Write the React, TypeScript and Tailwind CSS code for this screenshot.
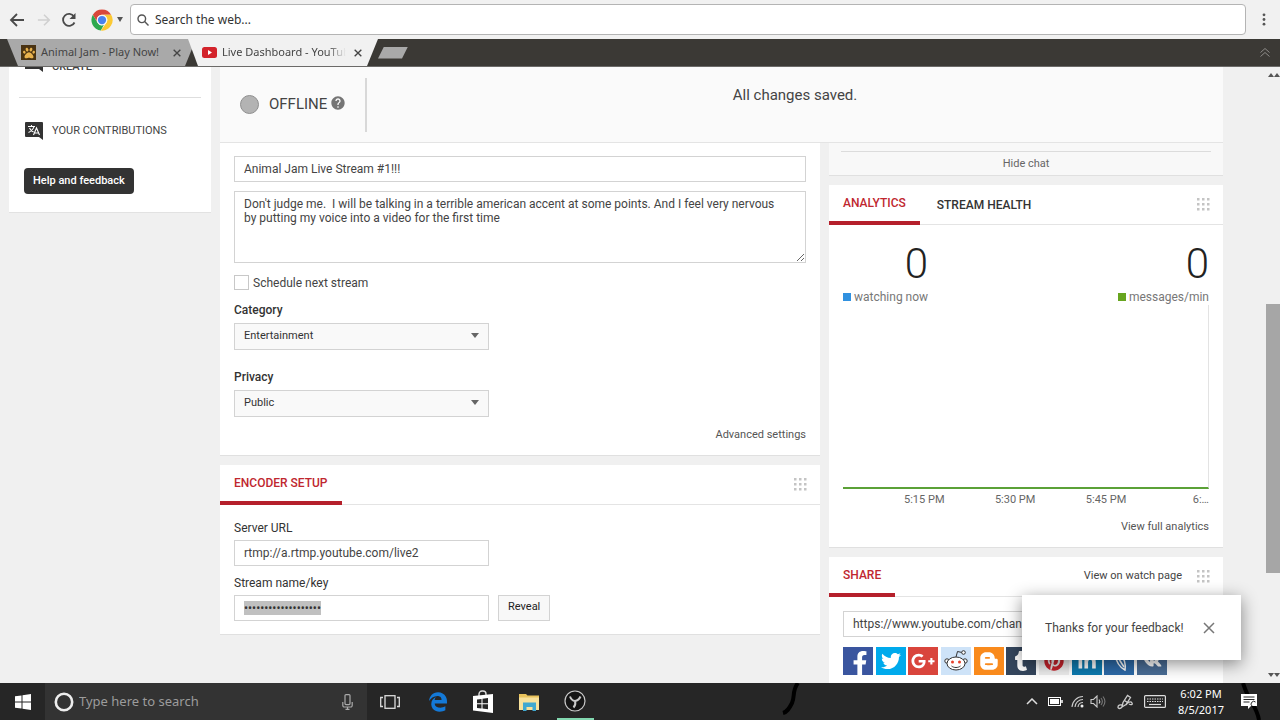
import React, { useEffect, useRef, useState } from 'react';
import {
  FaBloggerB,
  FaEdgeLegacy,
  FaFacebookF,
  FaGooglePlusG,
  FaLinkedinIn,
  FaPaw,
  FaPinterest,
  FaTumblr,
  FaTwitter,
  FaVk,
} from 'react-icons/fa';
import { MdHelp } from 'react-icons/md';

const inputClass =
  'h-[26px] w-full border border-[#d3d3d3] bg-white px-[9px] text-xs text-[#444] outline-none';

const ChromeLogo = () => (
  <svg viewBox="0 0 48 48" className="size-[22px]">
    <circle cx="24" cy="24" r="23" fill="#fff" />
    <path d="M24 1a23 23 0 0 1 20 11.5H24a11.5 11.5 0 0 0-10 17L4 12.5A23 23 0 0 1 24 1z" fill="#d9483b" />
    <path d="M4 12.5l10 17.200A11.500 11.500 0 0 0 28 35l-6.500 12A23 23 0 0 1 4 12.500z" fill="#2da94f" />
    <path d="M44 12.500A23 23 0 0 1 21.500 47L34 29.700A11.500 11.500 0 0 0 28 13l-4-.5z" fill="#fbc934" />
    <circle cx="24" cy="24" r="11.500" fill="#f5f5f5" />
    <circle cx="24" cy="24" r="9" fill="#4a82ee" />
  </svg>
);

const RedditLogo = () => (
  <svg viewBox="0 0 30 30" className="size-[30px]" stroke="#333" strokeWidth="1" fill="#fff">
    <circle cx="6" cy="15" r="2.200" />
    <circle cx="24" cy="15" r="2.200" />
    <path d="M15 11l1.500-5.500 4.500 1" fill="none" />
    <circle cx="22.500" cy="6.500" r="1.800" />
    <ellipse cx="15" cy="17.500" rx="9" ry="6.500" />
    <circle cx="11.500" cy="16" r="1.500" fill="#e8402a" stroke="none" />
    <circle cx="18.500" cy="16" r="1.500" fill="#e8402a" stroke="none" />
    <path d="M10.500 20c2.500 2 6.500 2 9 0" fill="none" />
  </svg>
);

const JournalLogo = () => (
  <svg viewBox="0 0 30 30" className="size-[30px]" fill="none" stroke="#fff" strokeWidth="1.500">
    <path d="M11 8c1 7 4 13 10 16 1-6-1-12-5-17z" />
    <path d="M13 10l7 11" />
  </svg>
);

const shares = [
  { name: 'Facebook', tile: 'bg-[#3a559f]', icon: <FaFacebookF className="mt-1 ml-1 size-6" /> },
  { name: 'Twitter', tile: 'bg-[#00aaec]', icon: <FaTwitter className="size-5" /> },
  { name: 'Google+', tile: 'bg-[#d9453c]', icon: <FaGooglePlusG className="size-6" /> },
  { name: 'Reddit', tile: 'bg-[#cee3f8]', icon: <RedditLogo /> },
  { name: 'Blogger', tile: 'bg-[#f98a1c]', icon: <FaBloggerB className="size-5" /> },
  { name: 'Tumblr', tile: 'bg-[#34465d]', icon: <FaTumblr className="size-5" /> },
  { name: 'Pinterest', tile: 'bg-[#eeeeee]', icon: <FaPinterest className="size-5 text-[#c8232c]" /> },
  { name: 'LinkedIn', tile: 'bg-[#0d7bb0]', icon: <FaLinkedinIn className="size-5" /> },
  { name: 'LiveJournal', tile: 'bg-[#2d6aa8]', icon: <JournalLogo /> },
  { name: 'VK', tile: 'bg-[#4a6d96]', icon: <FaVk className="size-5" /> },
];

const CloseIcon = ({ className }: { className: string }) => (
  <svg viewBox="0 0 12 12" className={className} stroke="currentColor" fill="none">
    <path d="M1 1l10 10M11 1L1 11" />
  </svg>
);

const DragDots = () => (
  <svg viewBox="0 0 13 13" className="size-[13px] shrink-0" fill="#c4c4c4">
    {[0, 5, 10].map((y) =>
      [0, 5, 10].map((x) => <rect key={`${x}-${y}`} x={x} y={y} width="2.500" height="2.500" />),
    )}
  </svg>
);

function Toolbar() {
  return (
    <header className="flex h-[39px] shrink-0 items-center bg-[#f1f1f1] pr-[14px] pl-[9px] font-['Noto_Sans',sans-serif]">
      <button aria-label="Back" className="mr-3">
        <svg viewBox="0 0 16 16" className="size-4" fill="none" stroke="#4a4a4a" strokeWidth="1.800">
          <path d="M15 8H2M8 2L2 8l6 6" />
        </svg>
      </button>
      <button aria-label="Forward" className="mr-[10px]">
        <svg viewBox="0 0 16 16" className="size-[14px]" fill="none" stroke="#d0d0d0" strokeWidth="1.800">
          <path d="M1 8h13M8 2l6 6-6 6" />
        </svg>
      </button>
      <button aria-label="Reload" className="mr-[14px]">
        <svg viewBox="0 0 16 16" className="size-4" fill="none" stroke="#4a4a4a" strokeWidth="1.800">
          <path d="M13.500 10.500A6 6 0 1 1 13 4.500" />
          <path d="M14.500 1v6h-6z" fill="#4a4a4a" stroke="none" />
        </svg>
      </button>
      <button aria-label="Search engine" className="mr-[7px] flex items-center gap-1">
        <ChromeLogo />
        <svg viewBox="0 0 6 5" className="h-[5px] w-[6px]" fill="#555">
          <path d="M0 0h6L3 5z" />
        </svg>
      </button>
      <label className="flex h-[31px] flex-1 items-center gap-[6px] rounded-sm border border-[#b4b4b4] bg-white px-[6px]">
        <svg viewBox="0 0 12 12" className="size-3" fill="none" stroke="#555" strokeWidth="1.400">
          <circle cx="4.800" cy="4.800" r="3.800" />
          <path d="M7.600 7.600L11.500 11.500" />
        </svg>
        <input
          aria-label="Search the web"
          defaultValue="Search the web..."
          className="flex-1 text-xs text-[#333] outline-none"
        />
      </label>
      <button aria-label="Menu" className="ml-4">
        <svg viewBox="0 0 4 14" className="h-[13px] w-1" fill="#555">
          <circle cx="2" cy="2" r="1.500" />
          <circle cx="2" cy="7" r="1.500" />
          <circle cx="2" cy="12" r="1.500" />
        </svg>
      </button>
    </header>
  );
}

function TabStrip() {
  return (
    <nav className="flex h-7 shrink-0 items-stretch border-b border-[#6b6a68] bg-[#3b3935] pl-[7px] font-['Noto_Sans',sans-serif] text-[11px] text-[#444]">
      <div className="flex w-[189px] items-center bg-[#a9a9a9] pl-[14px] [clip-path:polygon(0_0,100%_0,178px_100%,11px_100%)]">
        <span className="mr-[5px] flex size-[15px] items-center justify-center bg-[#4a3312]">
          <FaPaw className="size-3 text-[#e8b24d]" />
        </span>
        <a href="#play" className="w-[132px] whitespace-nowrap">
          Animal Jam - Play Now!
        </a>
        <button aria-label="Close Animal Jam tab">
          <CloseIcon className="size-2 [stroke-width:2]" />
        </button>
      </div>
      <div className="-ml-2 flex w-[190px] items-center bg-[#f1f1f1] pl-[14px] [clip-path:polygon(0_0,100%_0,179px_100%,10px_100%)]">
        <svg viewBox="0 0 15 11" className="mr-[5px] h-[11px] w-[15px] shrink-0">
          <rect width="15" height="11" rx="2.500" fill="#d3232b" />
          <path d="M6 3l4 2.500L6 8z" fill="#fff" />
        </svg>
        <a
          href="#live"
          className="mr-2 w-[124px] overflow-hidden whitespace-nowrap [mask-image:linear-gradient(to_right,#000_85%,transparent)]"
        >
          Live Dashboard - YouTube
        </a>
        <button aria-label="Close Live Dashboard tab">
          <CloseIcon className="size-2 [stroke-width:2]" />
        </button>
      </div>
      <button
        aria-label="New tab"
        className="h-3 w-[30px] self-center bg-[#a9a9a9] [clip-path:polygon(20%_0,100%_0,80%_100%,0_100%)]"
      />
      <svg viewBox="0 0 10 9" className="mr-[10px] ml-auto h-[9px] w-[10px] self-center" fill="none" stroke="#8d8b88">
        <path d="M0.500 4.500l4.500-4 4.500 4M0.500 8.500l4.500-4 4.500 4" />
      </svg>
    </nav>
  );
}

function Sidebar() {
  return (
    <aside className="-mt-[13px] w-[202px] shrink-0 self-start border-b border-[#e2e2e2] bg-white pb-[18px] text-[11px] text-[#444]">
      <a href="#create" className="ml-4 flex h-[18px] items-end gap-[9px] leading-none font-medium">
        <svg viewBox="0 0 18 18" className="size-[18px]" fill="#333">
          <path d="M0 0h18v18l-4-3H0z" />
        </svg>
        CREATE
      </a>
      <hr className="mx-[10px] mt-[25px] border-[#dedede]" />
      <a href="#contributions" className="mt-6 ml-4 flex h-[18px] items-center gap-[9px]">
        <svg viewBox="0 0 18 18" className="size-[18px]">
          <path d="M1 0h16a1 1 0 0 1 1 1v17l-4-3H1a1 1 0 0 1-1-1V1a1 1 0 0 1 1-1z" fill="#333" />
          <path
            d="M3 4.500h7M6.500 3v1.500M9 4.500C8.500 7 6.500 9 3.500 10.500M4.500 6c.8 1.800 2 3 4 4M8.500 13l3-7 3 7M9.500 11h4"
            fill="none"
            stroke="#fff"
            strokeWidth="1.100"
          />
        </svg>
        YOUR CONTRIBUTIONS
      </a>
      <button className="mt-7 ml-[15px] h-[26px] rounded-sm bg-[#333] px-[9px] font-medium text-white">
        Help and feedback
      </button>
    </aside>
  );
}

function Header() {
  return (
    <div className="flex h-[76px] items-center border-b border-[#e4e4e4] bg-[#fafafa]">
      <div className="flex h-[54px] w-[147px] items-center border-r-2 border-[#d8d8d8] pl-5 text-[15px] text-[#444]">
        <span className="mr-[10px] size-[19px] rounded-full border border-[#8f8f8f] bg-[#b3b3b3]" />
        OFFLINE
        <MdHelp className="mb-1 ml-[3px] size-4 text-[#757575]" />
      </div>
      <p className="flex-1 pb-[18px] text-center text-[15px] text-[#444]">All changes saved.</p>
    </div>
  );
}

function Dropdown({ id, label, options }: { id: string; label: string; options: string[] }) {
  return (
    <div className="w-[255px]">
      <label htmlFor={id} className="block h-5 text-xs leading-4 font-medium text-[#333]">
        {label}
      </label>
      <div className="relative">
        <select
          id={id}
          className="h-[27px] w-full appearance-none border border-[#d3d3d3] bg-[#f9f9f9] px-[9px] text-[11px] text-[#333]"
        >
          {options.map((option) => (
            <option key={option}>{option}</option>
          ))}
        </select>
        <svg viewBox="0 0 8 5" className="pointer-events-none absolute top-[11px] right-[10px] h-[5px] w-2" fill="#666">
          <path d="M0 0h8L4 5z" />
        </svg>
      </div>
    </div>
  );
}

function StreamForm() {
  return (
    <section className="flex flex-col border-b border-[#e0e0e0] bg-white px-[14px] pt-[13px] pb-3">
      <input aria-label="Stream title" defaultValue="Animal Jam Live Stream #1!!!" className={inputClass} />
      <textarea
        aria-label="Description"
        defaultValue="Don't judge me.  I will be talking in a terrible american accent at some points. And I feel very nervous by putting my voice into a video for the first time"
        className="mt-[9px] h-[72px] w-full border border-[#d3d3d3] bg-white py-[5px] pr-5 pl-[9px] text-xs leading-[14px] text-[#444] outline-none"
      />
      <label className="mt-3 flex h-[15px] items-center gap-1 text-xs text-[#444]">
        <input type="checkbox" className="size-[15px] appearance-none border border-[#c8c8c8] bg-white" />
        Schedule next stream
      </label>
      <div className="mt-3 flex flex-col gap-[19px]">
        <Dropdown id="category" label="Category" options={['Entertainment', 'Gaming', 'Music']} />
        <Dropdown id="privacy" label="Privacy" options={['Public', 'Unlisted', 'Private']} />
      </div>
      <a href="#advanced" className="mt-[10px] self-end text-[11px] leading-4 text-[#555]">
        Advanced settings
      </a>
    </section>
  );
}

function EncoderSetup() {
  const keyRef = useRef<HTMLInputElement>(null);

  useEffect(() => {
    keyRef.current?.focus({ preventScroll: true });
    keyRef.current?.select();
  }, []);

  return (
    <section className="border-b border-[#e0e0e0] bg-white">
      <div className="flex h-10 items-center justify-between border-b border-[#e4e4e4] pr-[13px]">
        <h2 className="-mb-px h-10 border-b-4 border-[#b5202b] px-[14px] text-xs leading-[37px] font-medium text-[#c0272f]">
          ENCODER SETUP
        </h2>
        <DragDots />
      </div>
      <div className="px-[14px] pt-[15px] pb-[13px] text-xs">
        <label htmlFor="server" className="block h-5 leading-4 text-[#333]">
          Server URL
        </label>
        <div className="w-[255px]">
          <input id="server" defaultValue="rtmp://a.rtmp.youtube.com/live2" className={inputClass} />
        </div>
        <label htmlFor="key" className="mt-[9px] block h-5 leading-4 text-[#333]">
          Stream name/key
        </label>
        <div className="flex gap-[9px]">
          <div className="w-[255px]">
            <input
              id="key"
              ref={keyRef}
              type="password"
              defaultValue="abcd-efgh-ijkl-mnop"
              className={`${inputClass} selection:bg-[#c0c0c0] selection:text-[#333]`}
            />
          </div>
          <button className="h-[26px] border border-[#d3d3d3] bg-[#f8f8f8] px-[9px] text-[11px] text-[#222]">
            Reveal
          </button>
        </div>
      </div>
    </section>
  );
}

function Analytics() {
  return (
    <section className="border-b border-[#e0e0e0] bg-white">
      <div className="flex h-10 items-center border-b border-[#e4e4e4] pr-[13px] text-xs font-medium">
        <button className="-mb-px h-10 border-b-4 border-[#b5202b] px-[14px] text-[#c0272f]">ANALYTICS</button>
        <button className="mr-auto ml-[17px] text-[#333]">STREAM HEALTH</button>
        <DragDots />
      </div>
      <div className="flex justify-between px-[14px] pt-[14px] text-xs leading-4 text-[#777]">
        <div className="text-right">
          <div className="text-[42px] leading-[50px] font-light text-[#222]">0</div>
          <span className="flex items-center gap-[3px]">
            <i className="size-2 bg-[#3091e0]" />
            watching now
          </span>
        </div>
        <div className="text-right">
          <div className="text-[42px] leading-[50px] font-light text-[#222]">0</div>
          <span className="flex items-center gap-[3px]">
            <i className="size-2 bg-[#67a51f]" />
            messages/min
          </span>
        </div>
      </div>
      <div className="mx-[14px] h-[184px] border-r border-b-2 border-r-[#e3e3e3] border-b-[#5ba137]" />
      <div className="mr-[14px] ml-[75px] flex h-[18px] justify-between pt-1 text-[11px] leading-[14px] text-[#666]">
        <span>5:15 PM</span>
        <span className="ml-3">5:30 PM</span>
        <span className="ml-3">5:45 PM</span>
        <span className="ml-7">6:…</span>
      </div>
      <div className="px-[14px] pt-3 pb-3 text-right text-[11px] leading-4 text-[#555]">
        <a href="#analytics">View full analytics</a>
      </div>
    </section>
  );
}

function Share() {
  return (
    <section className="bg-white">
      <div className="flex h-10 items-center border-b border-[#e4e4e4] pr-[13px]">
        <h2 className="-mb-px h-10 border-b-4 border-[#b5202b] px-[14px] text-xs leading-[37px] font-medium text-[#c0272f]">
          SHARE
        </h2>
        <a href="#watch" className="mr-[15px] ml-auto text-[11px] text-[#444]">
          View on watch page
        </a>
        <DragDots />
      </div>
      <div className="px-[14px] pt-[14px] pb-5">
        <input
          aria-label="Share link"
          defaultValue="https://www.youtube.com/channel/live"
          className={inputClass}
        />
        <div className="mt-[10px] flex w-[324px] justify-between">
          {shares.map((share) => (
            <a
              key={share.name}
              href="#share"
              aria-label={share.name}
              className={`flex h-7 w-[30px] items-center justify-center overflow-hidden text-white ${share.tile}`}
            >
              {share.icon}
            </a>
          ))}
        </div>
      </div>
    </section>
  );
}

function ScrollBar() {
  return (
    <div className="flex w-[14px] shrink-0 flex-col items-end bg-[#f0f0f0] pt-[6px] pb-[6px]">
      <svg viewBox="0 0 12 4" className="h-1 w-3" fill="#555">
        <path d="M0 4l3-4 3 4zM6 4l3-4 3 4z" />
      </svg>
      <div className="mt-[227px] h-[269px] w-full bg-[#a6a6a6]" />
      <svg viewBox="0 0 12 4" className="mt-auto h-1 w-3" fill="#555">
        <path d="M0 0h6L3 4zM6 0h6L9 4z" />
      </svg>
    </div>
  );
}

function Taskbar() {
  return (
    <footer className="relative flex h-[37px] shrink-0 items-center bg-[#262626] pr-[23px] font-['Noto_Sans',sans-serif] text-white">
      <button aria-label="Start" className="flex w-[45px] justify-center">
        <svg viewBox="0 0 16 16" className="size-4" fill="#fff">
          <path d="M0 2.300l6.500-.9v6.100H0zM7.500 1.200L16 0v7.500H7.500zM0 8.500h6.500v6.100L0 13.700zM7.500 8.500H16V16l-8.500-1.200z" />
        </svg>
      </button>
      <label className="flex h-full w-[322px] items-center bg-[#333] pr-[14px] pl-[9px]">
        <svg viewBox="0 0 20 20" className="mr-[5px] size-5 shrink-0" fill="none" stroke="#eee" strokeWidth="2.600">
          <circle cx="10" cy="10" r="8.200" />
        </svg>
        <input
          aria-label="Taskbar search"
          placeholder="Type here to search"
          className="min-w-0 flex-1 text-[13px] outline-none placeholder:text-[#9c9c9c]"
        />
        <svg viewBox="0 0 11 16" className="h-4 w-[11px]" fill="none" stroke="#aaa" strokeWidth="1.200">
          <rect x="3" y="0.600" width="5" height="10" rx="1" />
          <path d="M0.800 8v3.500a1.500 1.500 0 0 0 1.500 1.500h6.400a1.500 1.500 0 0 0 1.500-1.500V8M5.500 13v3M3.500 15.400h4" />
        </svg>
      </label>
      <button aria-label="Task view" className="flex w-[46px] justify-center">
        <svg viewBox="0 0 20 14" className="h-[14px] w-5" fill="none" stroke="#ddd" strokeWidth="1.300">
          <rect x="5" y="0.700" width="10" height="12.600" />
          <path d="M3 2.500H0.700v9H3M17 2.500h2.300v9H17" />
        </svg>
      </button>
      <button aria-label="Edge" className="flex w-[50px] justify-center">
        <FaEdgeLegacy className="size-5 text-[#1479d7]" />
      </button>
      <button aria-label="Store" className="flex w-10 justify-center">
        <svg viewBox="0 0 20 23" className="h-[23px] w-5">
          <path d="M6 6V4a3 3 0 0 1 3-3h1a3 3 0 0 1 3 3v2" fill="none" stroke="#ddd" strokeWidth="1.400" />
          <path d="M0 6l20-2v19L0 20.500z" fill="#fff" />
          <path d="M4 9.500l4.500-.6v4.300H4zM9.500 8.800L15 8v5.200H9.500zM4 14.200h4.500v4.200L4 17.900zM9.500 14.200H15v5l-5.500-.7z" fill="#262626" />
        </svg>
      </button>
      <button aria-label="File Explorer" className="flex w-[52px] justify-center">
        <svg viewBox="0 0 20 18" className="h-[18px] w-5">
          <path d="M0 1h7l1.500 1.500H20V17H0z" fill="#e9c35c" />
          <path d="M0 4.500h20V17H0z" fill="#f8e19b" />
          <path d="M4 18V9.500h13V18h-3.500v-4h-6v4z" fill="#40a8d0" />
        </svg>
      </button>
      <button aria-label="OBS" className="flex h-full w-10 items-center justify-center">
        <span className="flex h-full w-[37px] items-center justify-center border-b-2 border-[#83d8b0]">
          <svg viewBox="0 0 22 22" className="size-[22px]" fill="none" stroke="#c9c9c9">
            <circle cx="11" cy="11" r="10" fill="#151515" strokeWidth="1.200" />
            <path
              d="M6 6.500c1 2.800 2.600 4.200 5 4.500M11 11c2.500-.3 4.300-1.700 5.500-4.500M11 11c.8 2.400.3 4.500-1.500 6.500"
              strokeWidth="2"
            />
          </svg>
        </span>
      </button>
      {/* pen strokes over the bar */}
      <svg viewBox="0 0 24 37" className="absolute top-0 left-[780px] h-[37px] w-6" fill="none" stroke="#000">
        <path d="M18 0c-6 7-3 14-6 20s-5 9-9 10" strokeWidth="4" />
      </svg>
      <svg viewBox="0 0 24 37" className="absolute top-0 right-4 h-[37px] w-6" fill="none" stroke="#000">
        <path d="M3 0c2 6 4 12 9 20s6 11 7 17" strokeWidth="4" />
      </svg>
      <div className="relative ml-auto flex items-center">
        <svg viewBox="0 0 12 7" className="mr-[10px] h-[7px] w-3" fill="none" stroke="#ddd" strokeWidth="1.500">
          <path d="M1 6l5-5 5 5" />
        </svg>
        <svg viewBox="0 0 15 9" className="mr-2 h-[9px] w-[15px]" fill="none" stroke="#fff">
          <rect x="0.500" y="0.500" width="12" height="8" />
          <path d="M2 2h9v5H2z" fill="#fff" stroke="none" />
          <path d="M14 3v3" strokeWidth="1.500" />
        </svg>
        <svg viewBox="0 0 13 13" className="mr-[6px] size-[13px]" fill="none" stroke="#ccc" strokeWidth="1.100">
          <path d="M1 12A11 11 0 0 1 12 1.500M4 12a8 8 0 0 1 8-7.500M7 12a5 5 0 0 1 5-4.500" />
          <circle cx="11" cy="11" r="1.500" fill="#eee" stroke="none" />
        </svg>
        <svg viewBox="0 0 16 13" className="mr-[11px] h-[13px] w-4" fill="none" stroke="#ccc" strokeWidth="1.100">
          <path d="M1 4.500h2.500L7 1v11L3.500 8.500H1z" />
          <path d="M9 4.500c1 1.300 1 2.700 0 4" />
          <path d="M11 3c1.800 2.300 1.800 4.700 0 7M13 1.500c2.700 3.500 2.700 6.500 0 10" stroke="#777" />
        </svg>
        <svg viewBox="0 0 16 16" className="mr-[11px] size-4" fill="none" stroke="#ccc" strokeWidth="1.300">
          <path d="M5 13L6 8.500 10.500 1.500l3 2L9 10.500zM7.500 6.500l3 2M5 13c-1.500 2-4 2-4 0s2-2.500 4-2M9 11c1.500-3 5-4 6-2s-1.500 2-3 1" />
        </svg>
        <svg viewBox="0 0 22 13" className="mr-3 h-[13px] w-[22px]" fill="none" stroke="#ddd" strokeWidth="1.200">
          <rect x="0.600" y="0.600" width="20.800" height="11.800" rx="1" />
          <path d="M3 4h16M3 6.500h16" strokeDasharray="1.500 1" />
          <path d="M5 9.500h12" />
        </svg>
        <div className="mr-[17px] text-center text-[11px] leading-4">
          <div>6:02 PM</div>
          <div>8/5/2017</div>
        </div>
        <svg viewBox="0 0 16 15" className="h-[15px] w-4">
          <path d="M0 0h16v12h-6l-3 3v-3H0z" fill="#fff" />
          <path d="M2.500 3h11M2.500 5.500h11M2.500 8h6" stroke="#262626" />
          <path d="M11 12a2.500 2.500 0 0 1 3.500-4" stroke="#262626" fill="none" />
        </svg>
      </div>
    </footer>
  );
}

export default function App() {
  const [toast, setToast] = useState(true);

  return (
    <div className="flex h-screen flex-col overflow-hidden bg-[#f0f0f0] font-[Roboto,sans-serif]">
      <Toolbar />
      <TabStrip />
      <div className="relative flex min-h-0 flex-1 overflow-hidden pl-[9px]">
        <Sidebar />
        <main className="mr-[43px] ml-[9px] min-w-0 flex-1">
          <Header />
          <div className="flex items-start gap-[9px]">
            <div className="flex min-w-0 flex-1 flex-col gap-[9px]">
              <StreamForm />
              <EncoderSetup />
            </div>
            <div className="flex w-[394px] shrink-0 flex-col gap-[9px]">
              <section className="h-[33px] border-b border-[#e0e0e0] bg-[#f8f8f8] px-3 pt-[7px]">
                <button className="w-full border-t border-[#dcdcdc] pt-[5px] text-[11px] leading-[14px] text-[#666]">
                  Hide chat
                </button>
              </section>
              <Analytics />
              <Share />
            </div>
          </div>
        </main>
        <ScrollBar />
        {toast && (
          <div className="absolute right-[39px] bottom-[23px] flex h-[65px] w-[219px] items-center justify-between bg-white pr-[26px] pl-[23px] text-xs text-[#444] shadow-[0_4px_16px_rgba(0,0,0,0.45)]">
            Thanks for your feedback!
            <button aria-label="Dismiss" onClick={() => setToast(false)} className="text-[#777]">
              <CloseIcon className="size-3 [stroke-width:1.500]" />
            </button>
          </div>
        )}
      </div>
      <Taskbar />
    </div>
  );
}
